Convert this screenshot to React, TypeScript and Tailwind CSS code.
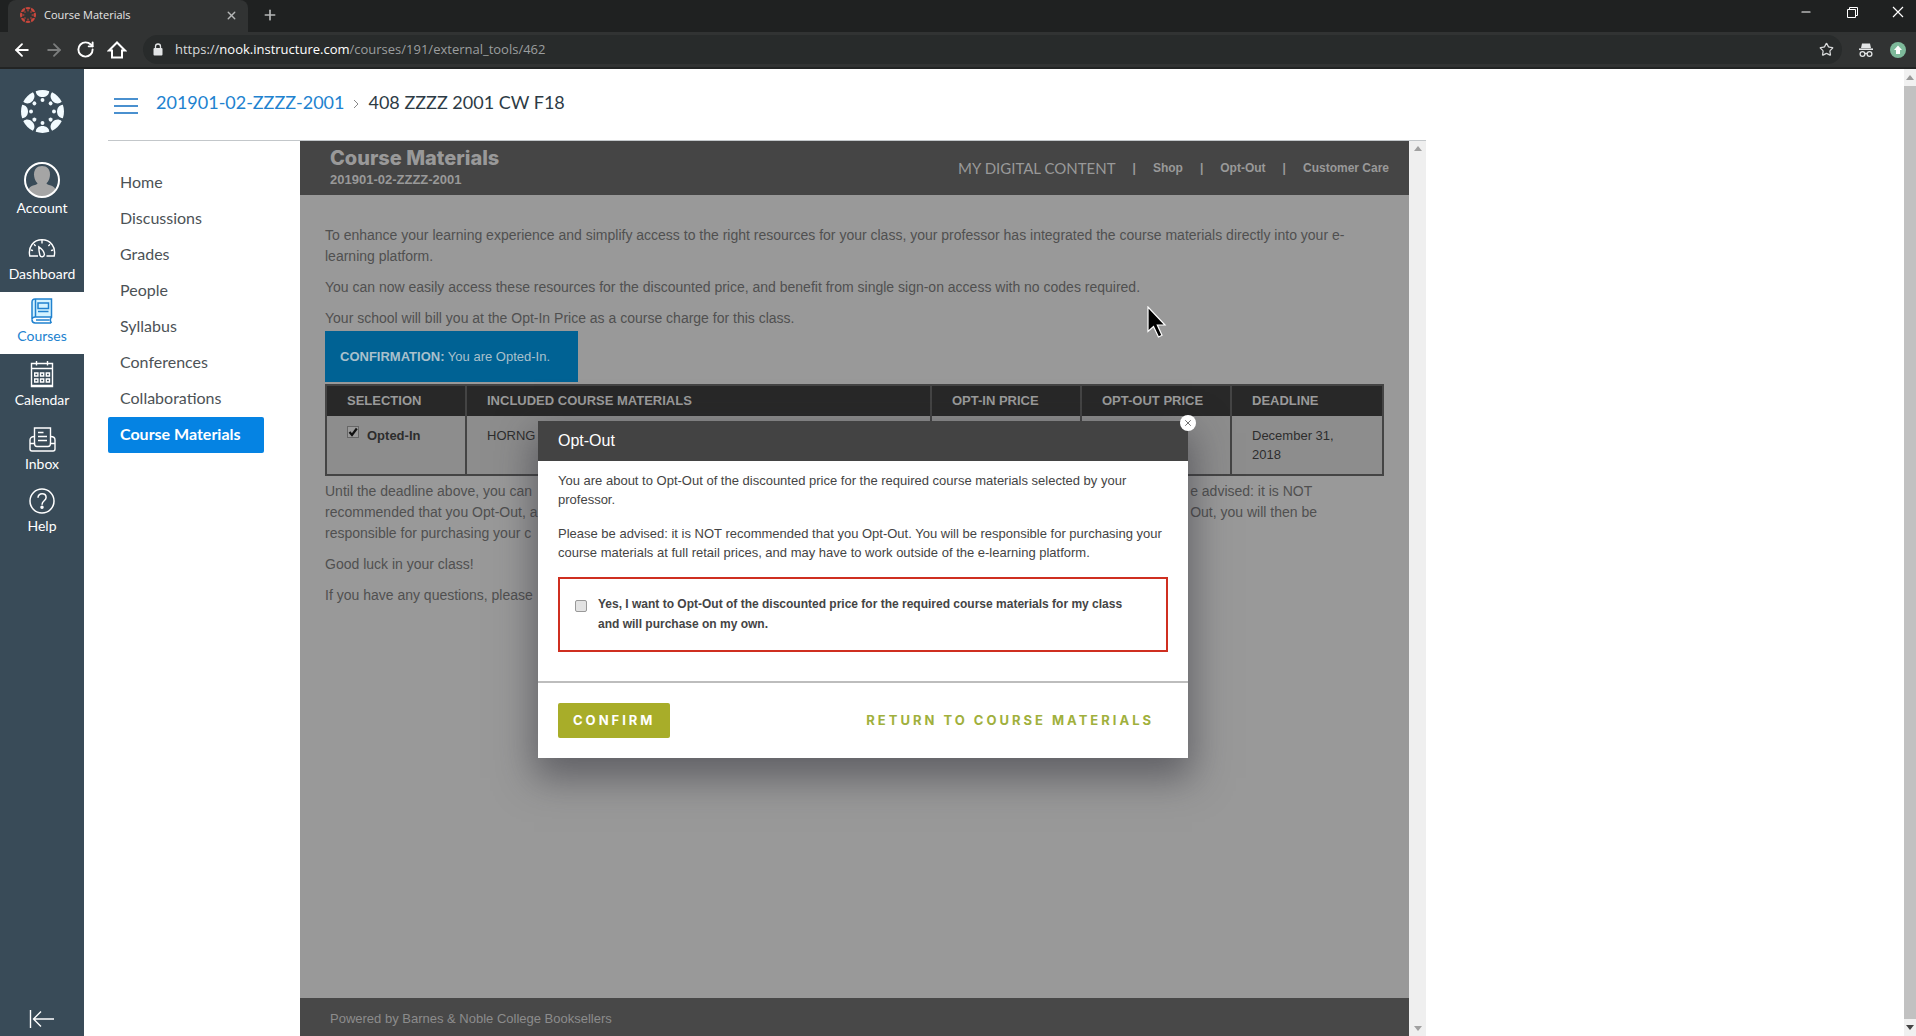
import React, { useState } from "react";
import { ArrowLeft, ArrowRight, Minus, Plus, RotateCw, Star, X } from "lucide-react";

const ANGLES = [0, 45, 90, 135, 180, 225, 270, 315];

function CanvasLogo({ size }: { size: number }) {
  return (
    <svg width={size} height={size} viewBox="-21 -21 42 42" fill="currentColor">
      {ANGLES.map((a) => (
        <g key={a} transform={`rotate(${a})`}>
          <path d="M-6.600 -19.900A21 21 0 0 1 6.600 -19.900C6.300 -16.200 3.500 -14.200 0 -14.200S-6.300 -16.200 -6.600 -19.900Z" />
          <circle cx="0" cy="-11.200" r="1.900" />
        </g>
      ))}
    </svg>
  );
}

function Avatar() {
  return (
    <svg width="36" height="36" viewBox="0 0 36 36">
      <clipPath id="avatar-clip">
        <circle cx="18" cy="18" r="16.5" />
      </clipPath>
      <g clipPath="url(#avatar-clip)" fill="#a5a5a5">
        <path d="M18 4c5 0 8 3.400 8 8.200c0 5.400-3 10.800-8 10.800s-8-5.400-8-10.800C10 7.400 13 4 18 4Z" />
        <path d="M3 36c0-9 2-11.500 8-13 2-.6 3-1.500 3-3h8c0 1.500 1 2.400 3 3 6 1.500 8 4 8 13Z" />
      </g>
      <circle cx="18" cy="18" r="17" fill="none" stroke="#fff" strokeWidth="2" />
    </svg>
  );
}

function DashboardIcon() {
  return (
    <svg width="28" height="20" viewBox="0 0 28 20" fill="none" stroke="currentColor" strokeWidth="1.400">
      <path d="M10 18H1.800C-.2 9 5.500 1.700 14 1.700S28.200 9 26.200 18H18.500" />
      <path d="M14 2v3.500M6 6.300l1.600 1.600M22 6.300l-1.600 1.600M3 12l2 .7M25 12l-2 .7" />
      <path d="M10.800 8.800c3 2 5.600 4.800 5.600 7.800a2.300 2.300 0 0 1-4.500.6c-.8-2.600-1.100-5.400-1.100-8.400Z" />
    </svg>
  );
}

function CoursesIcon() {
  return (
    <svg width="22" height="26" viewBox="0 0 22 26" fill="none" stroke="currentColor" strokeWidth="1.500">
      <path d="M4 1h16.500v18H4.200C2.200 19 1 20.200 1 21.800V4c0-1.800 1.200-3 3-3Z" fill="#d4f3ff" />
      <path d="M1 21.800C1 23.600 2.200 25 4.200 25H20M20.500 19c-1.500 1.800-1.500 4 0 6" />
      <path d="M4.500 1v18M5 22h13.500M7 13.500h10.500" />
      <rect x="7" y="5" width="10.500" height="5.500" />
    </svg>
  );
}

function CalendarIcon() {
  return (
    <svg width="24" height="28" viewBox="0 0 24 28" fill="none" stroke="currentColor" strokeWidth="1.400">
      <path d="M1.500 3.500h21v23h-21ZM1.500 8.500h21M6.500 1v4.500M17.500 1v4.500M1.500 25.500h21" />
      <path d="M4.700 13h3.200v3H4.700zM10.500 13h3.200v3h-3.200zM16.300 13h3.200v3h-3.200zM4.700 19h3.200v3H4.700zM10.500 19h3.200v3h-3.200zM16.300 19h3.200v3h-3.200z" />
    </svg>
  );
}

function InboxIcon() {
  return (
    <svg width="27" height="25" viewBox="0 0 27 25" fill="none" stroke="currentColor" strokeWidth="1.400">
      <path d="M5.500 16.500V1h16v15.500M9 5.500h5.500M9 9.500h9M9 13.500h9" />
      <path d="M5.500 9.500c-2.500 0-4.500 1-4.500 3.500v9c0 1.200.8 2 2 2h21c1.200 0 2-.8 2-2v-9c0-2.500-2-3.500-4.500-3.500" />
      <path d="M1 16.500h4.500c0 2 .8 3 2.500 3h11c1.700 0 2.500-1 2.500-3H26" />
    </svg>
  );
}

function HelpIcon() {
  return (
    <svg width="26" height="26" viewBox="0 0 26 26" fill="none" stroke="currentColor" strokeWidth="1.500">
      <circle cx="13" cy="13" r="12" />
      <path d="M9 9.800c0-2.400 1.700-4 4.100-4s4 1.500 4 3.700c0 3.200-4 3.300-4 6.700v.6" />
      <circle cx="13" cy="19.300" r="1" fill="currentColor" />
    </svg>
  );
}

function IncognitoIcon() {
  return (
    <svg width="16" height="16" viewBox="0 0 16 16" fill="none" stroke="#e3e5e6" strokeWidth="1.300">
      <path d="M4 1.500h8l1 4.500H3Z" fill="#e3e5e6" stroke="none" />
      <path d="M1 7.200h14" strokeWidth="1.600" />
      <circle cx="4.500" cy="12" r="2.400" />
      <circle cx="11.500" cy="12" r="2.400" />
      <path d="M6.900 11.500h2.200" />
    </svg>
  );
}

const globalNav = [
  { label: "Account", icon: <Avatar />, box: "h-[76px] pb-3" },
  { label: "Dashboard", icon: <DashboardIcon />, box: "h-[62px] gap-1.5 pb-2" },
  { label: "Courses", icon: <CoursesIcon />, box: "h-[62px] gap-0.5 pb-2" },
  { label: "Calendar", icon: <CalendarIcon />, box: "h-[64px] gap-0.5 pb-2" },
  { label: "Inbox", icon: <InboxIcon />, box: "h-[64px] gap-0.5 pb-2" },
  { label: "Help", icon: <HelpIcon />, box: "h-[62px] gap-0.5 pb-2" },
];

const courseNav = [
  "Home",
  "Discussions",
  "Grades",
  "People",
  "Syllabus",
  "Conferences",
  "Collaborations",
  "Course Materials",
];

function BrowserChrome() {
  return (
    <header className="shrink-0 bg-[#1f2121] font-['Open_Sans','Noto_Sans',sans-serif]">
      <div className="flex h-8 items-stretch">
        <div className="ml-2 flex w-60 items-center gap-2 rounded-t-lg bg-[#313333] pb-0.5 pl-3 pr-2.5 text-[#e6e6e6]">
          <span className="text-[#c9473c]">
            <CanvasLogo size={16} />
          </span>
          <span className="flex-1 text-[11px]">Course Materials</span>
          <button aria-label="Close tab" className="text-[#b5b7b7]">
            <X size={13} strokeWidth={2.500} />
          </button>
        </div>
        <button aria-label="New tab" className="ml-3.5 pb-0.5 text-[#b5b7b7]">
          <Plus size={16} strokeWidth={2.500} />
        </button>
        <div className="ml-auto flex items-center gap-[34px] pb-2 pr-3 text-white">
          <button aria-label="Minimize">
            <Minus size={14} strokeWidth={1.800} />
          </button>
          <button aria-label="Restore">
            <svg width="11" height="11" viewBox="0 0 11 11" fill="none" stroke="currentColor">
              <path d="M.5 2.500h8v8h-8ZM2.500 2.500v-2h8v8h-2" />
            </svg>
          </button>
          <button aria-label="Close">
            <svg width="12" height="12" viewBox="0 0 12 12" stroke="currentColor" strokeWidth="1.200">
              <path d="M1 1l10 10M11 1L1 11" />
            </svg>
          </button>
        </div>
      </div>
      <div className="flex h-[37px] items-center border-b-2 border-[#222424] bg-[#313333] pl-3 pr-2.5 text-white">
        <div className="flex items-center gap-3">
          <button aria-label="Back">
            <ArrowLeft size={20} strokeWidth={2.200} />
          </button>
          <button aria-label="Forward" className="text-[#7b7d7d]">
            <ArrowRight size={20} strokeWidth={2.200} />
          </button>
          <button aria-label="Reload">
            <RotateCw size={19} strokeWidth={2.400} />
          </button>
          <button aria-label="Home page">
            <svg width="20" height="20" viewBox="0 0 20 20" fill="none" stroke="currentColor" strokeWidth="2">
              <path d="M2 10.500L10 2.500L18 10.500H15V17.500H5V10.500Z" />
            </svg>
          </button>
        </div>
        <div className="ml-4 flex h-[29px] flex-1 items-center rounded-full bg-[#282b2b] pl-2.5 pr-2">
          <svg width="10" height="13" viewBox="0 0 10 13">
            <rect x="0.500" y="5" width="9" height="7.500" rx="1" fill="#e3e5e6" />
            <path d="M2.500 5V3.500a2.500 2.500 0 0 1 5 0V5" fill="none" stroke="#e3e5e6" strokeWidth="1.300" />
          </svg>
          <span className="ml-3 flex-1 text-[13px] text-[#9b9e9f]">
            <span className="text-[#d8dadb]">https://</span>
            <span className="text-white">nook.instructure.com</span>
            /courses/191/external_tools/462
          </span>
          <Star size={15} className="text-[#d8dadb]" />
        </div>
        <div className="ml-4 flex items-center gap-4">
          <IncognitoIcon />
          <svg width="16" height="16" viewBox="0 0 16 16">
            <circle cx="8" cy="8" r="8" fill="#7db99a" />
            <path d="M8 3.500L12 8H10v4H6V8H4Z" fill="#fff" />
          </svg>
        </div>
      </div>
    </header>
  );
}

function GlobalNav() {
  return (
    <nav className="flex w-[84px] shrink-0 flex-col bg-[#394b58] text-sm text-white">
      <a href="#" aria-label="Canvas" className="flex h-[85px] items-center justify-center text-[#f2fbff]">
        <CanvasLogo size={43} />
      </a>
      {globalNav.map((item) => (
        <a
          key={item.label}
          href="#"
          className={`flex flex-col items-center justify-end leading-5 ${item.box} ${
            item.label === "Courses" ? "bg-white text-[#2182cf]" : ""
          }`}
        >
          {item.icon}
          {item.label}
        </a>
      ))}
      <button aria-label="Minimize navigation" className="mx-auto mt-auto pb-2">
        <svg width="26" height="18" viewBox="0 0 26 18" fill="none" stroke="currentColor" strokeWidth="1.400">
          <path d="M1.500 0v18M25 9H4.500M12 1.500L4.500 9l7.500 7.500" />
        </svg>
      </button>
    </nav>
  );
}

function CourseNav() {
  return (
    <nav className="flex w-[192px] shrink-0 flex-col pr-9 pt-6 text-base text-[#4c5256]">
      {courseNav.map((label) => (
        <a
          key={label}
          href="#"
          className={`flex h-9 items-center rounded-xs pb-0.5 pl-3 ${
            label === "Course Materials" ? "bg-[#0583e3] font-bold text-white" : ""
          }`}
        >
          {label}
        </a>
      ))}
    </nav>
  );
}

function MaterialsTable() {
  const head = "border-x-2 border-[#444] px-5 pb-0.5 text-left font-bold text-[#9a9a9a]";
  const cell = "border-x-2 border-[#444] px-5 pt-2.5 align-top";
  return (
    <table className="mt-0.5 w-full table-fixed border-collapse border-2 border-[#444] text-[13px] leading-[19px] text-[#2d2d2d]">
      <colgroup>
        <col className="w-[140px]" />
        <col />
        <col className="w-[150px]" />
        <col className="w-[150px]" />
        <col className="w-[152px]" />
      </colgroup>
      <thead>
        <tr className="h-[31px] bg-[#282828]">
          <th className={head}>SELECTION</th>
          <th className={head}>INCLUDED COURSE MATERIALS</th>
          <th className={head}>OPT-IN PRICE</th>
          <th className={head}>OPT-OUT PRICE</th>
          <th className={head}>DEADLINE</th>
        </tr>
      </thead>
      <tbody>
        <tr className="h-[59px] bg-[#8d8d8d]">
          <td className={cell}>
            <label className="flex items-start gap-2 font-bold">
              <span className="relative">
                <input
                  type="checkbox"
                  defaultChecked
                  className="block size-3 appearance-none border border-[#666] bg-[#999]"
                />
                <svg
                  width="12"
                  height="12"
                  viewBox="0 0 12 12"
                  className="pointer-events-none absolute left-0 top-0"
                  fill="none"
                  stroke="#111"
                  strokeWidth="2.200"
                >
                  <path d="M2.500 6L5 9L9.800 2.500" />
                </svg>
              </span>
              Opted-In
            </label>
          </td>
          <td className={cell}>HORNG</td>
          <td className={cell} />
          <td className={cell} />
          <td className={cell}>December 31, 2018</td>
        </tr>
      </tbody>
    </table>
  );
}

function OptOutModal() {
  const [agreed, setAgreed] = useState(false);
  return (
    <div
      role="dialog"
      aria-label="Opt-Out"
      className="relative w-[650px] bg-white text-[13px] leading-[19px] text-[#444] shadow-[0_16px_36px_4px_rgba(40,40,50,0.5)]"
    >
      <button
        aria-label="Close dialog"
        className="absolute -right-2 -top-1.5 flex size-4 items-center justify-center rounded-full bg-white text-[#555]"
      >
        <X size={10} strokeWidth={2} />
      </button>
      <h2 className="bg-[#434343] px-5 text-base leading-10 text-white">Opt-Out</h2>
      <div className="px-5 pb-[29px] pt-2.5">
        <p className="mb-[15px]">
          You are about to Opt-Out of the discounted price for the required course materials selected by your professor.
        </p>
        <p className="mb-[15px]">
          Please be advised: it is NOT recommended that you Opt-Out. You will be responsible for purchasing your course
          materials at full retail prices, and may have to work outside of the e-learning platform.
        </p>
        <label className="flex gap-[11px] border-2 border-[#cf2f20] px-[15px] pb-4 pt-[15px] text-xs font-bold leading-5">
          <input
            type="checkbox"
            checked={agreed}
            onChange={(e) => setAgreed(e.target.checked)}
            className="mt-1.5 size-3 shrink-0 appearance-none rounded-xs border border-[#999] bg-[#e3e3e3] checked:bg-[#777]"
          />
          <span>
            Yes, I want to Opt-Out of the discounted price for the required course materials for my class
            <br />
            and will purchase on my own.
          </span>
        </label>
      </div>
      <div className="flex items-center justify-between border-t-2 border-[#bdbdbd] px-5 py-5 font-[Inter,sans-serif] font-bold tracking-[3px]">
        <button className="rounded-xs bg-[#a8ad29] px-[15px] py-2 text-white">CONFIRM</button>
        <a href="#" className="mr-3.5 text-[#a0b03c]">
          RETURN TO COURSE MATERIALS
        </a>
      </div>
    </div>
  );
}

function ToolFrame() {
  return (
    <section className="relative flex min-w-0 flex-1 font-['Liberation_Sans',Arial,sans-serif]">
      <div className="flex min-w-0 flex-1 flex-col bg-[#999]">
        <div className="flex h-[54px] shrink-0 items-center justify-between bg-[#454545] pl-[30px] pr-5 text-[#999]">
          <div>
            <h1 className="font-[Inter,sans-serif] text-xl font-extrabold leading-6">Course Materials</h1>
            <div className="text-[13px] font-bold leading-5">201901-02-ZZZZ-2001</div>
          </div>
          <div className="flex gap-[17px] text-xs font-bold leading-5">
            <a href="#" className="font-[Lato,sans-serif] text-[15px] font-normal">
              MY DIGITAL CONTENT
            </a>
            <span>|</span>
            <a href="#">Shop</a>
            <span>|</span>
            <a href="#">Opt-Out</a>
            <span>|</span>
            <a href="#">Customer Care</a>
          </div>
        </div>
        <div className="flex-1 px-[25px] pt-[30px] text-sm leading-[21px] text-[#505050]">
          <p className="mb-2.5">
            To enhance your learning experience and simplify access to the right resources for your class, your
            professor has integrated the course materials directly into your e-learning platform.
          </p>
          <p className="mb-2.5">
            You can now easily access these resources for the discounted price, and benefit from single sign-on access
            with no codes required.
          </p>
          <p>Your school will bill you at the Opt-In Price as a course charge for this class.</p>
          <div className="mt-0.5 w-[253px] bg-[#006294] p-[15px] text-[13px] text-[#a9c0cc]">
            <b>CONFIRMATION:</b> You are Opted-In.
          </div>
          <MaterialsTable />
          <div className="mb-2.5 mt-[5px] flex justify-between pr-[67px]">
            <p>
              Until the deadline above, you can
              <br />
              recommended that you Opt-Out, a
              <br />
              responsible for purchasing your c
            </p>
            <p>
              e advised: it is NOT
              <br />
              Out, you will then be
            </p>
          </div>
          <p className="mb-2.5">Good luck in your class!</p>
          <p>If you have any questions, please</p>
        </div>
        <footer className="flex h-[38px] shrink-0 items-center bg-[#484848] pl-[30px] pt-1 text-[13px] text-[#8c8c8c]">
          Powered by Barnes &amp; Noble College Booksellers
        </footer>
      </div>
      <div className="flex w-[17px] shrink-0 flex-col items-center justify-between bg-[#efefef] py-[5px] text-[#a0a0a0]">
        <svg width="8" height="5" viewBox="0 0 8 5" fill="currentColor">
          <path d="M4 0L8 5H0Z" />
        </svg>
        <svg width="8" height="5" viewBox="0 0 8 5" fill="currentColor">
          <path d="M4 5L8 0H0Z" />
        </svg>
      </div>
      <div className="absolute inset-x-0 top-[280px] flex justify-center">
        <OptOutModal />
      </div>
      <svg width="20" height="32" viewBox="0 0 20 32" className="absolute left-[847px] top-[165px]">
        <path
          d="M1 1V25.500L6.500 20.500L11.500 31L15 29.300L10.300 19H18Z"
          fill="#000"
          stroke="#fff"
          strokeWidth="1.200"
        />
      </svg>
    </section>
  );
}

export default function App() {
  return (
    <div className="flex h-screen flex-col overflow-hidden bg-white font-[Lato,sans-serif]">
      <BrowserChrome />
      <div className="flex min-h-0 flex-1">
        <GlobalNav />
        <main className="flex min-w-0 flex-1 flex-col pl-6">
          <div className="flex h-[72px] max-w-[1318px] shrink-0 items-center border-b border-[#c3c7ca] pb-1.5 text-lg text-[#2d3b45]">
            <button aria-label="Course menu" className="ml-1.5 mt-2 text-[#4a90cf]">
              <svg width="24" height="16" viewBox="0 0 24 16" stroke="currentColor" strokeWidth="2">
                <path d="M0 1h24M0 8h24M0 15h24" />
              </svg>
            </button>
            <a href="#" className="ml-[18px] text-[#2182cf]">
              201901-02-ZZZZ-2001
            </a>
            <svg width="6" height="10" viewBox="0 0 6 10" className="mx-[9px] mt-1" fill="none" stroke="#888">
              <path d="M1 1l4 4-4 4" />
            </svg>
            <span>408 ZZZZ 2001 CW F18</span>
          </div>
          <div className="flex min-h-0 max-w-[1318px] flex-1">
            <CourseNav />
            <ToolFrame />
          </div>
        </main>
        <div className="flex w-3 shrink-0 flex-col items-center bg-[#f1f1f1]">
          <svg width="8" height="5" viewBox="0 0 8 5" fill="#999" className="my-1.5 shrink-0">
            <path d="M4 0L8 5H0Z" />
          </svg>
          <div className="w-full flex-1 bg-[#c1c1c1]" />
          <svg width="8" height="5" viewBox="0 0 8 5" fill="#444" className="my-1.5 shrink-0">
            <path d="M4 5L8 0H0Z" />
          </svg>
        </div>
      </div>
    </div>
  );
}
